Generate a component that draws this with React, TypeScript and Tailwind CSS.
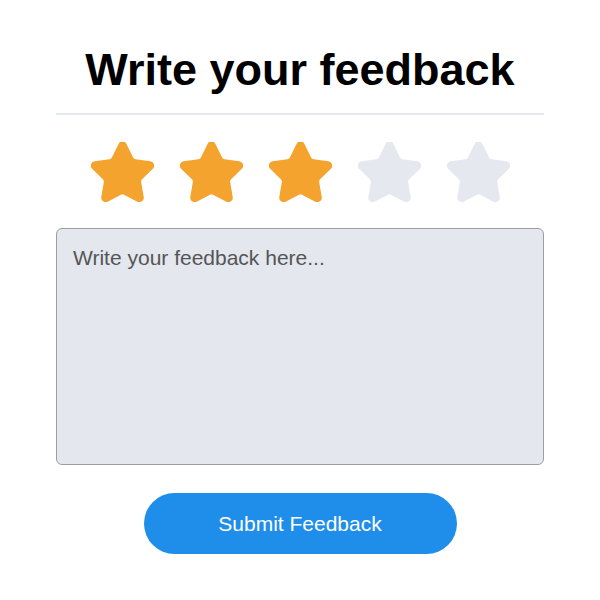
import { useState } from "react";

const STAR =
  "M11.525 2.295a.53.53 0 0 1 .95 0l2.31 4.679a2.123 2.123 0 0 0 1.595 1.16l5.166.756a.53.53 0 0 1 .294.904l-3.736 3.638a2.123 2.123 0 0 0-.611 1.878l.882 5.14a.53.53 0 0 1-.771.56l-4.618-2.428a2.122 2.122 0 0 0-1.973 0L6.396 21.01a.53.53 0 0 1-.77-.56l.881-5.139a2.122 2.122 0 0 0-.611-1.879L2.16 9.795a.53.53 0 0 1 .294-.906l5.165-.755a2.122 2.122 0 0 0 1.597-1.16z";

const Star = ({ filled, onClick }: { filled: boolean; onClick: () => void }) => (
  <button type="button" onClick={onClick} className="block">
    <svg
      viewBox="1.1 1.2 21.8 20.8"
      className={filled ? "w-[63px] h-[60px] text-[#f4a42e]" : "w-[63px] h-[60px] text-[#e5e8ee]"}
      fill="currentColor"
      stroke="currentColor"
      strokeWidth="2"
      strokeLinejoin="round"
    >
      <path d={STAR} />
    </svg>
  </button>
);

const App = () => {
  const [rating, setRating] = useState(3);
  const [text, setText] = useState("");

  return (
    <div className="min-h-screen bg-white font-['Liberation_Sans',Arial,sans-serif]">
      <div className="mx-auto w-[488px] pt-[47px] flex flex-col">
        <h1 className="text-center text-[45px] leading-none font-bold text-black">
          Write your feedback
        </h1>
        <div className="mt-[21px] h-[2px] bg-[#e3e9ef]" />

        <div className="mt-[27px] flex justify-center gap-[26px]">
          {[1, 2, 3, 4, 5].map((n) => (
            <Star key={n} filled={n <= rating} onClick={() => setRating(n)} />
          ))}
        </div>

        <textarea
          value={text}
          onChange={(e) => setText(e.target.value)}
          placeholder="Write your feedback here..."
          className="mt-[26px] h-[237px] w-full resize-none rounded-md border border-[#9a9ea4] bg-[#e4e7ee] px-4 pt-[13px] text-[21px] leading-[1.5] text-[#333] placeholder:text-[#555] outline-none"
        />

        <button
          type="button"
          className="mx-auto mt-[28px] h-[61px] w-[313px] rounded-full bg-[#1f8eea] text-[21px] text-white"
        >
          Submit Feedback
        </button>
      </div>
    </div>
  );
};

export default App;
